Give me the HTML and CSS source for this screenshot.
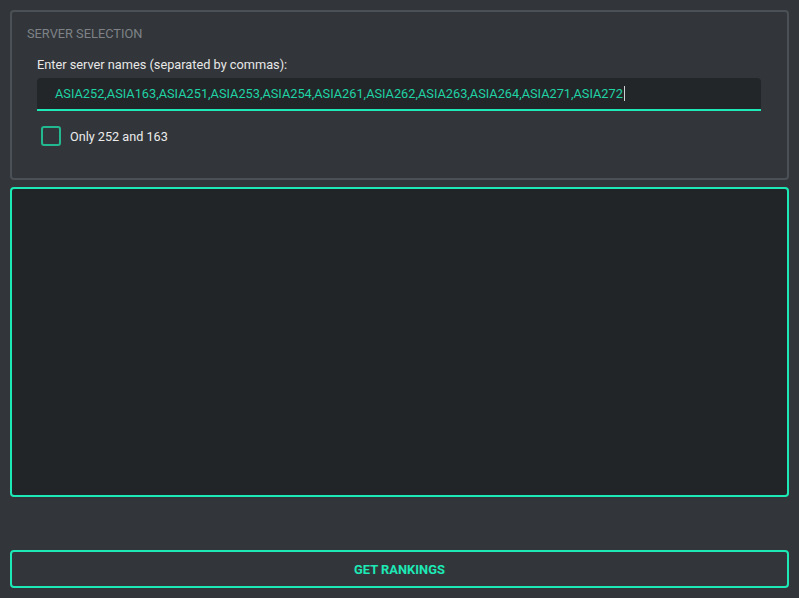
FILE: index.html
```html
<!DOCTYPE html>
<html lang="en">
<head>
<meta charset="utf-8">
<title>Server Rankings</title>
<link rel="stylesheet" href="styles.css">
</head>
<body>
<div class="app">
  <section class="group">
    <div class="group-title">SERVER SELECTION</div>
    <div class="group-body">
      <label class="field-label">Enter server names (separated by commas):</label>
      <div class="line-input"><span class="value">ASIA252,ASIA163,ASIA251,ASIA253,ASIA254,ASIA261,ASIA262,ASIA263,ASIA264,ASIA271,ASIA272</span><span class="caret"></span></div>
      <div class="check-row">
        <span class="checkbox"></span>
        <span class="check-label">Only 252 and 163</span>
      </div>
    </div>
  </section>
  <div class="output"></div>
  <button class="action" type="button">GET RANKINGS</button>
</div>
</body>
</html>
```

FILE: styles.css
```css
* { box-sizing: border-box; }

html, body {
  margin: 0;
  height: 100%;
}

body {
  background: #32363a;
  font-family: Roboto, "Noto Sans", "Liberation Sans", sans-serif;
  color: #e6e6e6;
}

.app {
  height: 100vh;
  padding: 10px;
  display: flex;
  flex-direction: column;
}

.group {
  height: 170px;
  border: 2px solid #4a5056;
  border-radius: 4px;
  padding: 15px 26px 0 15px;
}

.group-title {
  font-size: 12.8px;
  line-height: 14px;
  color: #7e8287;
}

.group-body {
  padding: 16px 0 0 10px;
  display: flex;
  flex-direction: column;
}

.field-label {
  font-size: 12.75px;
  line-height: 16px;
  color: #e8e8e8;
}

.line-input {
  margin-top: 5px;
  height: 33px;
  background: #232629;
  border-radius: 4px 4px 0 0;
  border-bottom: 2px solid #1de9b6;
  padding-left: 18px;
  display: flex;
  align-items: center;
  font-size: 12.78px;
  color: #1fd3a5;
  white-space: nowrap;
  overflow: hidden;
}

.caret {
  display: inline-block;
  width: 1px;
  height: 15px;
  margin-left: 1px;
  background: #cfd2d4;
}

.check-row {
  margin-top: 15px;
  padding-left: 4px;
  display: flex;
  align-items: center;
  gap: 9px;
}

.checkbox {
  width: 20px;
  height: 20px;
  border: 2px solid #22b990;
  border-radius: 3px;
}

.check-label {
  font-size: 12.65px;
  line-height: 16px;
  padding-top: 1px;
  color: #ececec;
}

.output {
  flex: 1;
  margin-top: 7px;
  margin-bottom: 53px;
  background: #222528;
  border: 2px solid #1de9b6;
  border-radius: 4px;
}

.action {
  height: 38px;
  padding-top: 2px;
  background: #32363a;
  border: 2px solid #1de9b6;
  border-radius: 4px;
  color: #1de9b6;
  font-family: Roboto, "Noto Sans", "Liberation Sans", sans-serif;
  font-weight: 700;
  font-size: 12.9px;
  cursor: pointer;
}
```
